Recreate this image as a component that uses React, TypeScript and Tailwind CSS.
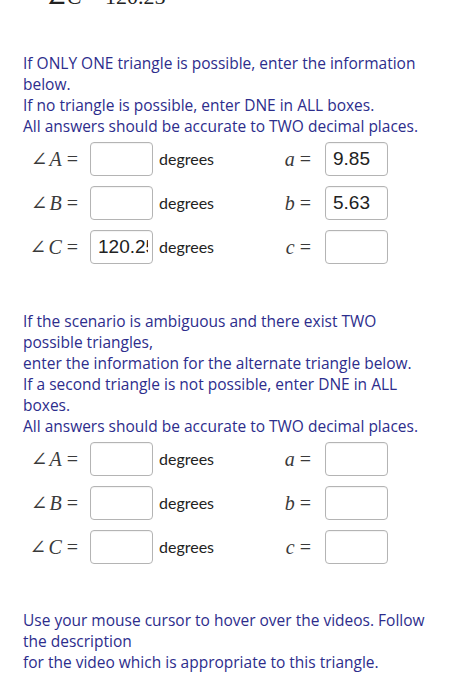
import React from "react";

const body = "font-['Open_Sans','Lato',sans-serif] text-[15.5px] leading-[21px] text-[#2d2d8c]";

function Box({ value }: { value?: string }) {
  return (
    <div className="w-[63px] h-[34px] border border-[#b4b4b4] rounded-[4px] bg-white flex items-center pl-[7px] pr-[4px] shadow-[inset_0_1px_1px_rgba(0,0,0,0.05)]">
      <div className="overflow-hidden whitespace-nowrap font-['Liberation_Sans',Arial,sans-serif] text-[19px] leading-[22px] text-[#222]">
        {value}
      </div>
    </div>
  );
}

function Label({ pre, v }: { pre?: boolean; v: string }) {
  return (
    <span className="flex items-center font-['Liberation_Serif','DejaVu_Serif','Times_New_Roman',serif] text-[20px] text-[#3a3a3a] whitespace-nowrap">
      {pre && <span className="mr-[2px]">∠</span>}
      <i>{v}</i>
      <span className="ml-[5px]">=</span>
    </span>
  );
}

function Row({ ang, side, angVal, sideVal }: { ang: string; side: string; angVal?: string; sideVal?: string }) {
  return (
    <div className="flex items-center h-[34px]">
      <div className="w-[67px] pr-[12px] flex justify-end">
        <Label pre v={ang} />
      </div>
      <Box value={angVal} />
      <div className="w-[104px] pl-[6px] font-['Lato','Open_Sans',sans-serif] text-[16px] text-[#222]">degrees</div>
      <div className="w-[68px] pr-[14px] flex justify-end">
        <Label v={side} />
      </div>
      <Box value={sideVal} />
    </div>
  );
}

function Table({ vals }: { vals: (string | undefined)[] }) {
  return (
    <div className="flex flex-col gap-[10px]">
      <Row ang="A" side="a" angVal={vals[0]} sideVal={vals[1]} />
      <Row ang="B" side="b" angVal={vals[2]} sideVal={vals[3]} />
      <Row ang="C" side="c" angVal={vals[4]} sideVal={vals[5]} />
    </div>
  );
}

export default function App() {
  return (
    <div className="w-[450px] h-[700px] bg-white overflow-hidden pl-[23px] pr-[20px]">
      <div className="mt-[-14px] pl-[24px] h-[22px] font-['Liberation_Serif','Times_New_Roman',serif] text-[22px] leading-[22px] text-[#222]">
        ∠<i>C</i> = 120.25
      </div>
      <div className={`${body} mt-[45px]`}>
        <p>If ONLY ONE triangle is possible, enter the information below.</p>
        <p>If no triangle is possible, enter DNE in ALL boxes.</p>
        <p>All answers should be accurate to TWO decimal places.</p>
      </div>
      <div className="mt-[5px]">
        <Table vals={[undefined, "9.85", undefined, "5.63", "120.25", undefined]} />
      </div>
      <div className={`${body} mt-[47px]`}>
        <p>If the scenario is ambiguous and there exist TWO possible triangles,</p>
        <p>enter the information for the alternate triangle below.</p>
        <p>If a second triangle is not possible, enter DNE in ALL boxes.</p>
        <p>All answers should be accurate to TWO decimal places.</p>
      </div>
      <div className="mt-[5px]">
        <Table vals={[]} />
      </div>
      <div className={`${body} mt-[46px]`}>
        <p>Use your mouse cursor to hover over the videos. Follow the description</p>
        <p>for the video which is appropriate to this triangle.</p>
      </div>
    </div>
  );
}
